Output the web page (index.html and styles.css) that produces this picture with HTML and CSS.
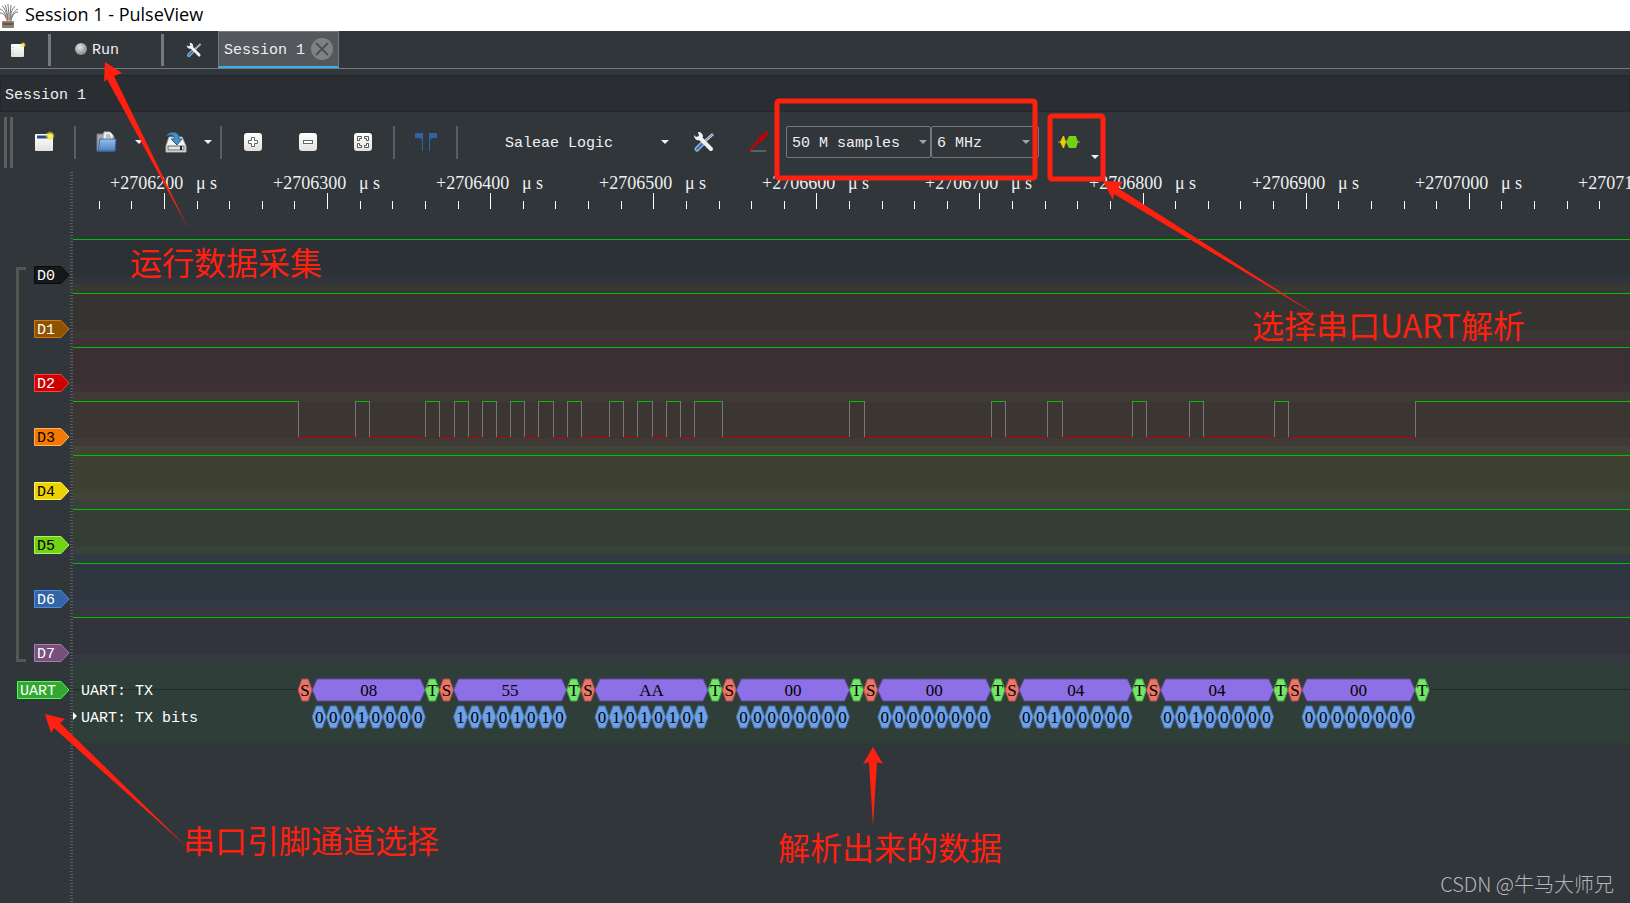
FILE: index.html
```html
<!DOCTYPE html>
<html lang="zh-CN">
<head>
    <meta charset="UTF-8">
    <meta name="viewport" content="width=device-width, initial-scale=1.0">
    <title>Session 1 - PulseView</title>
    <link rel="stylesheet" href="styles.css">
</head>
<body>
    <svg class="defs" width="0" height="0" aria-hidden="true">
        <linearGradient id="paper" x1="0" y1="0" x2="0" y2="1">
            <stop offset="0" stop-color="#ffffff"/>
            <stop offset="1" stop-color="#e2e2dc"/>
        </linearGradient>
        <linearGradient id="folder" x1="0" y1="0" x2="0" y2="1">
            <stop offset="0" stop-color="#9cbfe6"/>
            <stop offset="1" stop-color="#4a80c0"/>
        </linearGradient>
        <radialGradient id="led" cx=".4" cy=".35" r=".7">
            <stop offset="0" stop-color="#e4e4de"/>
            <stop offset="1" stop-color="#85857f"/>
        </radialGradient>
        <radialGradient id="glow">
            <stop offset="0" stop-color="#ffffc0"/>
            <stop offset=".4" stop-color="#f7e52e"/>
            <stop offset="1" stop-color="#f7e52e" stop-opacity="0"/>
        </radialGradient>
        <symbol id="tools" viewBox="0 0 22 22">
            <path d="M20 3 L10 12" stroke="#dfe8f2" stroke-width="2.4"/>
            <path d="M20 3 L10 12" stroke="#3b6ba8" stroke-width="1"/>
            <path d="M9 13 L4 18" stroke="#8fb2d8" stroke-width="5" stroke-linecap="round"/>
            <path d="M9 13 L4 18" stroke="#3d6ca8" stroke-width="2" stroke-linecap="round"/>
            <path d="M8 8 L18 18" stroke="#f2f2f0" stroke-width="4" stroke-linecap="round"/>
            <path d="M5 1 L6 5 L3 6 L1 4 C1 8 4 10 7 9 L10 6 C10 3 8 1 5 1 Z" fill="#f2f2f0"/>
        </symbol>
    </svg>

    <header class="titlebar">
        <svg class="logo" width="19" height="26" viewBox="0 0 19 26">
            <g fill="none" stroke="#777" stroke-width="1">
                <path d="M7 17 C5 10 4 8 0 6 M8 17 C6 9 5 5 2 3 M8 17 C7 8 6 4 5 2 M9 17 C9 8 8 4 8 1 M10 17 C10 8 11 4 11 2 M10 17 C11 8 13 5 15 3 M11 17 C13 10 14 8 18 6 M11 17 C12 12 15 9 18 9 M7 17 C5 12 3 10 0 10"/>
            </g>
            <path d="M6 12 L7 18" stroke="#e45bd0" stroke-width="1"/>
            <path d="M8 11 V18" stroke="#e06050" stroke-width="1"/>
            <path d="M9 11 V18" stroke="#e8c840" stroke-width="1"/>
            <path d="M10 11 V18" stroke="#58b858" stroke-width="1"/>
            <path d="M12 12 L11 18" stroke="#6080e0" stroke-width="1"/>
            <rect x="2" y="18" width="12" height="7" rx="1" fill="#8a8070"/>
            <rect x="3" y="20" width="10" height="2" fill="#5f574a"/>
        </svg>
        <h1>Session 1 - PulseView</h1>
    </header>

    <nav class="mainbar">
        <button class="tiny" aria-label="New session">
            <svg width="16" height="16" viewBox="0 0 16 16">
                <rect x="1" y="2" width="13" height="13" rx="1" fill="url(#paper)"/>
                <path d="M3 5 V12" stroke="#b5b5b0" stroke-dasharray="1 2"/>
                <circle cx="13" cy="3" r="3" fill="url(#glow)"/>
            </svg>
        </button>
        <span class="bar"></span>
        <button class="run">
            <svg width="13" height="13" viewBox="0 0 13 13"><circle cx="6" cy="6" r="6" fill="url(#led)"/></svg>
            <span class="caption">Run</span>
        </button>
        <span class="bar"></span>
        <button class="settings" aria-label="Settings">
            <svg width="16" height="16"><use href="#tools"/></svg>
        </button>
        <div class="tab">
            <a class="caption" href="#session">Session 1</a>
            <button class="close" aria-label="Close session">
                <svg width="22" height="22" viewBox="0 0 22 22">
                    <circle cx="11" cy="11" r="11" fill="#7f8183"/>
                    <path d="M5 5 L17 17 M17 5 L5 17" stroke="#4d5054" stroke-width="2"/>
                </svg>
            </button>
        </div>
    </nav>

    <h2 class="dock" id="session">Session 1</h2>

    <div class="toolbar">
        <span class="handle"></span>
        <button class="tool" aria-label="New view">
            <svg width="22" height="22" viewBox="0 0 22 22">
                <rect x="2" y="3" width="18" height="17" rx="1" fill="url(#paper)"/>
                <path d="M4 6 H15" stroke="#204a87" stroke-width="3"/>
                <circle cx="17" cy="5" r="5" fill="url(#glow)"/>
            </svg>
        </button>
        <span class="sep"></span>
        <button class="tool" aria-label="Open">
            <svg width="22" height="22" viewBox="0 0 22 22">
                <path d="M1 20 V3 H7 L9 5 H18 V20 Z" fill="#a5a8aa" stroke="#777a7c"/>
                <path d="M7 9 L8 1 H14 L17 4 V9 Z" fill="#f2f2f0" stroke="#bbb"/>
                <path d="M10 4 H14 M10 6 H15" stroke="#888"/>
                <path d="M4 8 H20 L19 20 H2 Z" fill="url(#folder)" stroke="#3767a5"/>
            </svg>
        </button>
        <button class="drop" aria-label="Recent files"><i class="caret"></i></button>
        <button class="tool" aria-label="Save">
            <svg width="22" height="22" viewBox="0 0 22 22">
                <path d="M4 6 H17 L21 15 V21 H1 V15 Z" fill="#f4f4f2" stroke="#aaa"/>
                <rect x="3" y="15" width="16" height="4" fill="#e4e4e2" stroke="#666"/>
                <path d="M16 15 V19" stroke="#222" stroke-width="2"/>
                <path d="M2 5 C2 1 13 -1 14 6 V8 H17 L12 14 L6 8 H9 C10 4 6 3 2 5 Z" fill="#4a90c4" stroke="#28628f"/>
            </svg>
        </button>
        <button class="drop" aria-label="Save options"><i class="caret"></i></button>
        <span class="sep"></span>
        <button class="tool" aria-label="Zoom in">
            <svg width="20" height="20" viewBox="0 0 20 20">
                <rect x="1" y="1" width="18" height="18" rx="3" fill="url(#paper)"/>
                <path d="M8.5 5.5 H11.5 V8.5 H14.5 V11.5 H11.5 V14.5 H8.5 V11.5 H5.5 V8.5 H8.5 Z" fill="#fff" stroke="#666"/>
            </svg>
        </button>
        <button class="tool" aria-label="Zoom out">
            <svg width="20" height="20" viewBox="0 0 20 20">
                <rect x="1" y="1" width="18" height="18" rx="3" fill="url(#paper)"/>
                <rect x="5.5" y="8.5" width="9" height="3" fill="#fff" stroke="#666"/>
            </svg>
        </button>
        <button class="tool" aria-label="Zoom to fit">
            <svg width="20" height="20" viewBox="0 0 20 20">
                <rect x="1" y="1" width="18" height="18" rx="3" fill="url(#paper)"/>
                <path d="M4.500 8.500 V4.500 H8.500 V6.500 H6.500 V8.500 Z M11.500 4.500 H15.500 V8.500 H13.500 V6.500 H11.500 Z M4.500 11.500 H6.500 V13.500 H8.500 V15.500 H4.500 Z M15.500 11.500 V15.500 H11.500 V13.500 H13.500 V11.500 Z" fill="#fff" stroke="#555"/>
            </svg>
        </button>
        <span class="sep"></span>
        <button class="tool" aria-label="Show cursors">
            <svg width="22" height="20" viewBox="0 0 22 20">
                <path d="M0 1 H8 V19 H7 V8 L5 6 H0 Z M22 1 H14 V19 H15 V8 L17 6 H22 Z" fill="#2f63a8"/>
            </svg>
        </button>
        <span class="sep"></span>
        <button class="device"><span class="caption">Saleae Logic</span><i class="caret"></i></button>
        <button class="tool" aria-label="Configure device">
            <svg width="22" height="22"><use href="#tools"/></svg>
        </button>
        <button class="tool" aria-label="Configure channels">
            <svg width="22" height="22" viewBox="0 0 22 22">
                <path d="M3 20 H18" stroke="#5c5f62" stroke-width="2"/>
                <path d="M1 20 L10 11" stroke="#c00" stroke-width="2"/>
                <path d="M8 11 L9 8 L13 6 L14 3 L17 2 L18 0 L20 1 L19 4 L18 6 L15 9 L11 12 Z" fill="#d00000"/>
                <path d="M14 3 L18 6 M10 8 L12 11" stroke="#930000"/>
            </svg>
        </button>
        <label class="combo samples">
            <select aria-label="Sample count"><option>50 M samples</option></select>
        </label>
        <label class="combo rate">
            <select aria-label="Sample rate"><option>6 MHz</option></select>
        </label>
        <button class="decoder" aria-label="Add protocol decoder">
            <svg width="22" height="12" viewBox="0 0 22 12">
                <path d="M0 6 H22" stroke="#999"/>
                <path d="M2 6 L5 0 H6 L8 6 L6 12 H5 Z" fill="#f0c800"/>
                <path d="M8 6 L11 0 H18 L20 6 L18 12 H11 Z" fill="#73d216"/>
            </svg>
            <i class="caret"></i>
        </button>
    </div>

    <main class="view">
        <div class="labels" id="labels">
            <span class="group"></span>
        </div>
        <div class="traces" id="traces">
            <svg class="ruler" id="ruler"></svg>
        </div>
    </main>

    <svg class="notes">
        <g class="frame">
            <rect x="777" y="101" width="258" height="77" rx="2"/>
            <rect x="1050" y="116" width="53" height="63" rx="2"/>
        </g>
        <g class="arrow">
            <path d="M105 62 L122 73 L114 76 L188 228 L107 79 L104 82 Z"/>
            <path d="M1103 181 L1123 182 L1118 188 L1323 319 L1114 194 L1113 200 Z"/>
            <path d="M45 714 L65 719 L60 723 L187 847 L54 728 L51 733 Z"/>
            <path d="M873 747 L883 764 L877 762 L873 826 L869 762 L863 764 Z"/>
        </g>
        <g class="note">
            <text x="130" y="275">运行数据采集</text>
            <text x="1252" y="338">选择串口UART解析</text>
            <text x="183" y="853">串口引脚通道选择</text>
            <text x="778" y="860">解析出来的数据</text>
        </g>
    </svg>
    <div class="watermark">CSDN @牛马大师兄</div>

    <script>
        const bytes = [0x08, 0x55, 0xAA, 0x00, 0x00, 0x04, 0x04, 0x00];
        const bit = 14.14;      // px per UART bit
        const start = 225;      // px from the left of the trace area
        const labels = document.getElementById('labels');
        const traces = document.getElementById('traces');

        function tag(name, cls, width) {
            const w = width - 1;
            return `<div class="row ${cls}"><svg class="tag" width="${width}" height="18">
                <path d="M0.5 0.5 H${w - 8} L${w} 9 L${w - 8} 17.5 H0.5 Z"/>
                <text x="3" y="14">${name}</text></svg></div>`;
        }

        function hexagon(x, y, w, text, cls) {
            const c = w > 20 ? 5 : 4;
            const r = x + w;
            return `<g class="${cls}"><path d="M${x} ${y + 11} L${x + c} ${y} H${r - c} L${r} ${y + 11} L${r - c} ${y + 22} H${x + c} Z"/>
                <text x="${x + w / 2}" y="${y + 17}">${text}</text></g>`;
        }

        // time ruler, a major division is 100 µs
        let ruler = '';
        for (let i = -2; 91 + i * 32.62 < traces.clientWidth + 54; i++) {
            const x = Math.round(91 + i * 32.62);
            const major = i % 5 === 0;
            ruler += `<path d="M${x + 0.5} ${major ? 21 : 29} V37"/>`;
            if (major) {
                ruler += `<text x="${x - 54}" y="17">+${2706200 + i * 20}</text><text x="${x + 32}" y="17">μ</text><text x="${x + 46}" y="17">s</text>`;
            }
        }
        document.getElementById('ruler').innerHTML = ruler;

        // bits on the line, LSB first
        const dataBits = b => [0, 1, 2, 3, 4, 5, 6, 7].map(n => (b >> n) & 1);
        const line = bytes.flatMap(b => [0, ...dataBits(b), 1]);

        function uartWave() {
            let high = `M0 9.5 H${start}`, low = '', edge = '', last = 1;
            line.forEach((v, i) => {
                const x = Math.round(start + i * bit), end = Math.round(start + (i + 1) * bit);
                if (v !== last) edge += `M${x + 0.5} 9 V45`;
                if (v) high += `M${x} 9.5 H${end}`;
                else low += `M${x} 45.5 H${end}`;
                last = v;
            });
            high += `M${Math.round(start + line.length * bit)} 9.5 H4000`;
            return `<path class="edge" d="${edge}"/><path class="low" d="${low}"/><path class="high" d="${high}"/>`;
        }

        for (let i = 0; i < 8; i++) {
            labels.innerHTML += tag('D' + i, 'd' + i, 36);
            const wave = i === 3 ? uartWave() : '<path class="high" d="M0 9.5 H4000"/>';
            traces.innerHTML += `<svg class="row d${i}"><rect class="shade" y="10" width="100%" height="36"/>${wave}</svg>`;
        }

        labels.innerHTML += tag('UART', 'uart', 53);
        let decode = `<path class="axis" d="M0 27.5 H${start} M${start + 80 * bit} 27.5 H4000"/>
            <text class="name" x="8" y="33">UART: TX</text><text class="name" x="8" y="60">UART: TX bits</text>
            <path class="expand" d="M0 50 L4 54 L0 58 Z"/>`;
        bytes.forEach((b, n) => {
            const x = start + n * 10 * bit;
            decode += hexagon(x, 17, bit, 'S', 'startbit');
            decode += hexagon(x + bit, 17, 8 * bit, b.toString(16).toUpperCase().padStart(2, '0'), 'byte');
            decode += hexagon(x + 9 * bit, 17, bit, 'T', 'stopbit');
            dataBits(b).forEach((v, i) => decode += hexagon(x + (i + 1) * bit, 44, bit, v, 'databit'));
        });
        traces.innerHTML += `<svg class="decode">${decode}</svg>`;
    </script>
</body>
</html>
```
FILE: styles.css
```css
* {
    box-sizing: border-box;
}

body {
    margin: 0;
    min-height: 100vh;
    display: flex;
    flex-direction: column;
    position: relative;
    overflow-x: hidden;
    background: #31363b;
    color: #eff0f1;
    font: 15px/20px "Liberation Mono", "Noto Sans CJK SC", monospace;
}

button,
select {
    margin: 0;
    padding: 0;
    border: none;
    background: none;
    color: inherit;
    font: inherit;
}

button {
    display: flex;
    align-items: center;
    justify-content: center;
}

.defs {
    position: absolute;
}

.caption {
    padding-top: 3px;
}

.titlebar {
    display: flex;
    align-items: center;
    gap: 6px;
    height: 31px;
    background: #fff;
    color: #000;
}

.titlebar h1 {
    margin: 0;
    padding-bottom: 4px;
    font: 18px/26px "Open Sans", sans-serif;
}

.mainbar {
    display: flex;
    align-items: center;
    height: 38px;
    border-bottom: 1px solid #76797c;
}

.tiny {
    width: 35px;
    margin-right: 13px;
}

.bar {
    width: 3px;
    height: 32px;
    background: #76797c;
}

.run {
    gap: 4px;
    width: 110px;
    padding-right: 18px;
}

.settings {
    width: 54px;
    padding-left: 6px;
}

.tab {
    display: flex;
    align-items: center;
    gap: 6px;
    align-self: stretch;
    padding: 0 5px;
    border: 1px solid #76797c;
    border-bottom: 2px solid #3daee9;
    background: #54575b;
}

.tab a {
    color: inherit;
    text-decoration: none;
}

.dock {
    margin: 6px 0 0;
    padding: 10px 4px 5px;
    border: 1px solid #25282b;
    background: #2a2e32;
    font: inherit;
}

.toolbar {
    display: flex;
    align-items: center;
    height: 60px;
}

.handle {
    width: 9px;
    height: 51px;
    margin: 0 3px 0 4px;
    border: solid #5c5d5e;
    border-width: 0 3px;
}

.tool {
    width: 55px;
    height: 50px;
}

.drop {
    width: 14px;
    height: 50px;
    padding-right: 5px;
}

.caret {
    border: 4px solid transparent;
    border-top-color: #eff0f1;
    border-bottom: none;
}

.sep {
    width: 8px;
    height: 33px;
    border: solid transparent;
    border-width: 0 3px;
    background: #5c5d5e;
    background-clip: padding-box;
}

.device {
    justify-content: space-between;
    width: 215px;
    height: 50px;
    padding: 0 7px 0 44px;
}

.combo {
    position: relative;
    height: 32px;
}

.combo select {
    appearance: none;
    width: 100%;
    height: 32px;
    padding: 3px 5px 0;
    border: 1px solid #76797c;
    border-radius: 2px;
}

.combo::after {
    content: "";
    position: absolute;
    right: 4px;
    top: 14px;
    border: 4px solid transparent;
    border-top-color: #a0a3a5;
    border-bottom: none;
}

.samples {
    width: 145px;
}

.rate {
    width: 108px;
}

.rate::after {
    right: 9px;
}

.decoder {
    gap: 11px;
    width: 64px;
    height: 50px;
    padding-left: 14px;
}

.decoder .caret {
    align-self: flex-end;
    margin-bottom: 8px;
}

.view {
    flex: 1;
    display: flex;
}

.labels {
    position: relative;
    width: 73px;
    padding-top: 58px;
    background: repeating-linear-gradient(#5b5e61 0 1px, transparent 1px 3px) right / 3px 100% no-repeat;
}

.labels .row {
    display: flex;
    justify-content: flex-end;
    align-items: flex-end;
    height: 54px;
    padding-right: 3px;
}

.labels .uart {
    height: 37px;
}

.group {
    position: absolute;
    left: 16px;
    top: 95px;
    width: 10px;
    height: 395px;
    border: 3px solid #555753;
    border-right: none;
}

.traces {
    flex: 1;
    min-width: 0;
    display: flex;
    flex-direction: column;
    overflow: hidden;
}

.traces svg {
    width: 100%;
}

.ruler {
    height: 58px;
}

.ruler path {
    stroke: #fff;
}

.ruler text {
    fill: #eff0f1;
    font: 18px "Liberation Serif", serif;
}

.traces .row {
    height: 54px;
    background: var(--tint);
}

.shade {
    fill: #000;
    opacity: .06;
}

.high {
    stroke: #00c000;
}

.low {
    stroke: #c00000;
}

.edge {
    stroke: #777;
}

.d0 { --tint: #2f353a; --fill: #16191a; --line: #080a0a; --text: #fff; }
.d1 { --tint: #393835; --fill: #8f5202; --line: #d07c08; --text: #fff; }
.d2 { --tint: #3f3237; --fill: #cc0000; --line: #ff4040; --text: #fff; }
.d3 { --tint: #403a37; --fill: #f57900; --line: #ffb060; --text: #000; }
.d4 { --tint: #424436; --fill: #edd400; --line: #fff06a; --text: #000; }
.d5 { --tint: #384238; --fill: #73d216; --line: #a8f85c; --text: #000; }
.d6 { --tint: #313a45; --fill: #3465a4; --line: #4c8ee6; --text: #fff; }
.d7 { --tint: #363741; --fill: #75507b; --line: #b078ba; --text: #fff; }
.uart { --fill: #31a831; --line: #50ff50; --text: #fff; }

.tag {
    overflow: visible;
}

.tag path {
    fill: var(--fill);
    stroke: var(--line);
}

.tag text {
    fill: var(--text);
}

.decode {
    height: 81px;
    background: #303e39;
}

.startbit {
    fill: #ea7568;
    stroke: #a8504a;
}

.byte {
    fill: #8e70e6;
    stroke: #5f4a9c;
}

.stopbit {
    fill: #72e668;
    stroke: #4ca048;
}

.databit {
    fill: #6ca0e8;
    stroke: #4a72a8;
}

.decode g text {
    fill: #000;
    stroke: none;
    text-anchor: middle;
    font: 17px "Liberation Serif", serif;
}

.decode .name,
.expand {
    fill: #fff;
}

.axis {
    stroke: #222b28;
}

.notes {
    position: absolute;
    left: 0;
    top: 0;
    width: 100%;
    height: 100%;
    pointer-events: none;
}

.frame {
    fill: none;
    stroke: #ff2010;
    stroke-width: 5px;
}

.arrow,
.note {
    fill: #ff2010;
}

.note {
    font: 400 32px "Noto Sans CJK SC", sans-serif;
}

.watermark {
    position: absolute;
    right: 16px;
    bottom: 7px;
    color: #b4b6b8;
    font: 300 20px/24px "Noto Sans CJK SC", sans-serif;
}
```
